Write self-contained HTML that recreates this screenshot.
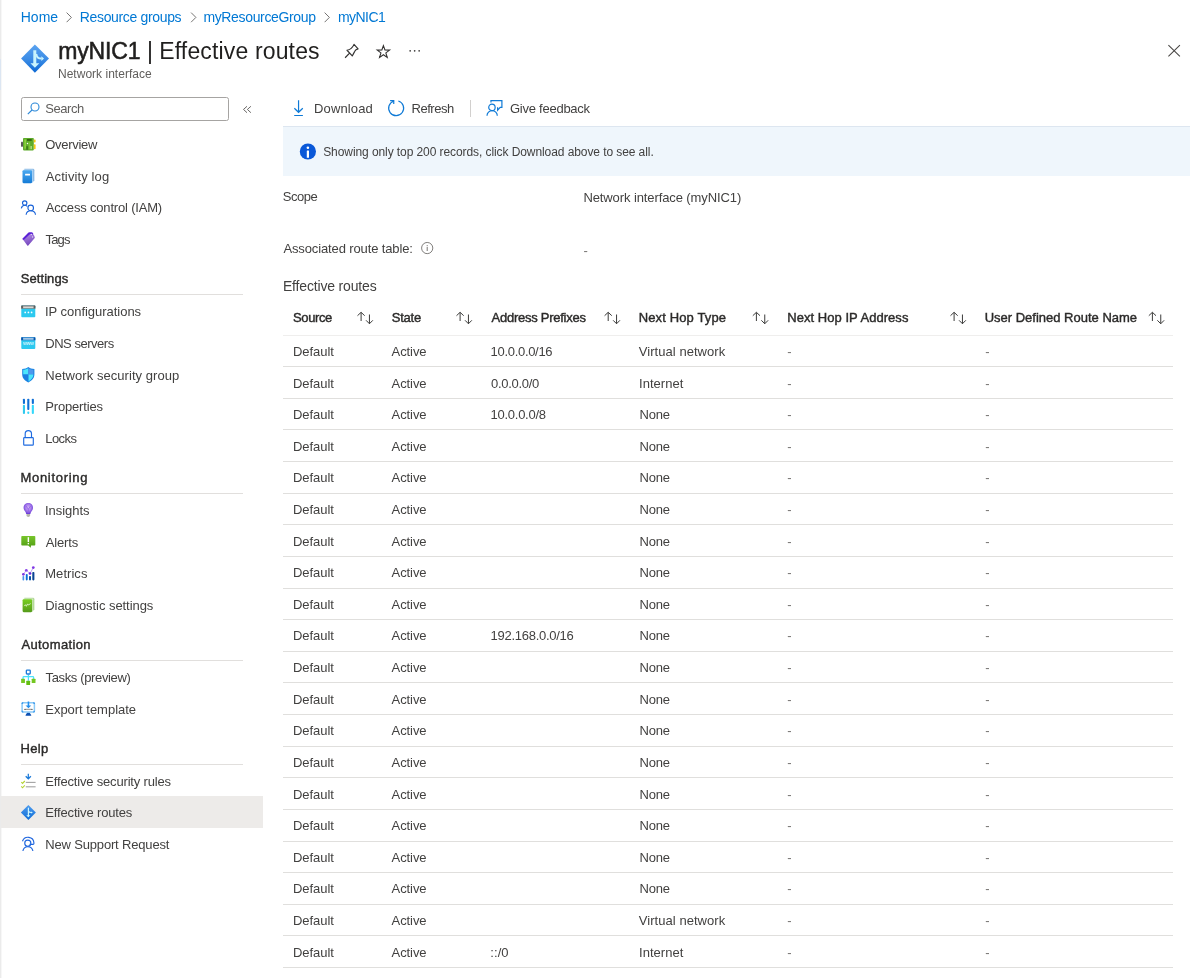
<!DOCTYPE html>
<html lang="en"><head><meta charset="utf-8"><title>myNIC1 | Effective routes</title>
<style>
*{box-sizing:border-box;margin:0;padding:0}
html,body{width:1200px;height:978px;overflow:hidden;background:#fff}
body{position:relative;font-family:"Liberation Sans",sans-serif;font-size:13px;color:#323130}
.a{position:absolute;white-space:nowrap;line-height:20px}
.t{position:absolute;white-space:nowrap;line-height:20px;color:#424140}
.bc{font-size:14px;color:#0078d4}
.sb{-webkit-text-stroke:0.4px #2b2a29;color:#2b2a29}
.ln{position:absolute;left:21px;width:222px;height:1px;background:#e1dfdd}
.ic{position:absolute;left:20px;width:16px;height:16px}
.rl{position:absolute;left:283px;width:890px;height:1px;background:#e0dfdd}
.sort{position:absolute;width:18px;height:14px}
</style></head><body><div id="root" style="position:absolute;left:0;top:0;width:1200px;height:978px;will-change:transform;filter:blur(0.35px)">
<div style="position:absolute;left:0;top:0;width:1px;height:978px;background:#ebebeb"></div><div style="position:absolute;left:1px;top:0;width:1px;height:978px;background:#f7f7f7"></div>
<div style="position:absolute;left:0;top:59px;width:1px;height:31px;background:#dce6f2"></div>
<div class="t bc" style="left:20.75px;top:7.4px;font-size:14px">Home</div>
<div class="t bc" style="left:79.75px;top:7.4px;font-size:14px;letter-spacing:-0.339px">Resource groups</div>
<div class="t bc" style="left:203.4px;top:7.4px;font-size:14px;letter-spacing:-0.350px">myResourceGroup</div>
<div class="t bc" style="left:337.9px;top:7.4px;font-size:14px;letter-spacing:-0.530px">myNIC1</div>
<svg class="a" style="left:66px;top:12px" width="8" height="12" viewBox="-0 -0.2 8 12"><path d="M0.6 0.4 L5.4 5.2 L0.6 10" fill="none" stroke="#6e6c6a" stroke-width="0.95"/></svg>
<svg class="a" style="left:190px;top:12px" width="8" height="12" viewBox="-0.5 -0.2 8 12"><path d="M0.6 0.4 L5.4 5.2 L0.6 10" fill="none" stroke="#6e6c6a" stroke-width="0.95"/></svg>
<svg class="a" style="left:324px;top:12px" width="8" height="12" viewBox="-0 -0.2 8 12"><path d="M0.6 0.4 L5.4 5.2 L0.6 10" fill="none" stroke="#6e6c6a" stroke-width="0.95"/></svg>
<svg class="a" style="left:14px;top:38px" width="42" height="42" viewBox="0 0 42 42"><defs><linearGradient id="dg" x1="0" y1="0" x2="0" y2="1"><stop offset="0" stop-color="#5aa3f0"/><stop offset="0.5" stop-color="#3d8de6"/><stop offset="1" stop-color="#0a68d4"/></linearGradient></defs><path d="M20.9 6.6 L35 20.6 L20.9 34.8 L7.1 20.6 Z" fill="url(#dg)"/><path d="M19.3 12.2 H22.3 V25.3 H25.3 L20.9 29.7 L16.4 25.3 H19.3 Z" fill="#c9f4fd"/><path d="M22.3 16 Q22.6 20.6 27.6 20.6" fill="none" stroke="#c9f4fd" stroke-width="2"/><path d="M27.4 18.2 L30 20.6 L27.4 23 Z" fill="#c9f4fd"/></svg>
<div class="t" style="left:58.25px;top:40.95px;font-size:23px;color:#201f1e;-webkit-text-stroke:0.55px #201f1e;letter-spacing:-0.150px">myNIC1</div>
<div class="t" style="left:147px;top:41.2px;font-size:23px;color:#201f1e">|</div>
<div class="t" style="left:159.25px;top:41.2px;font-size:23px;color:#201f1e;letter-spacing:0.150px">Effective routes</div>
<div class="t" style="left:58px;top:63.8px;font-size:12px;color:#605e5c;letter-spacing:0.016px">Network interface</div>
<svg class="a" style="left:338px;top:36px" width="90" height="30" viewBox="0 0 90 30"><path d="M16 8.4 L20.1 12.9 Q17.6 13.4 16.6 15.6 Q15.6 17.4 14.25 19.9 L9 14.25 Q11.4 13.9 13.2 12.4 Q14.9 11 16 8.4 Z M11.6 17.1 L7.1 21.75" fill="none" stroke="#323130" stroke-width="1.15" stroke-linejoin="round"/><path d="M45.40 9.60 L46.93 14.00 L51.58 14.09 L47.87 16.90 L49.22 21.36 L45.40 18.70 L41.58 21.36 L42.93 16.90 L39.22 14.09 L43.87 14.00 Z" fill="none" stroke="#323130" stroke-width="1.1" stroke-linejoin="miter"/><circle cx="72.15" cy="14.8" r="0.85" fill="#3b3a39"/><circle cx="76.65" cy="14.8" r="0.85" fill="#3b3a39"/><circle cx="81.15" cy="14.8" r="0.85" fill="#3b3a39"/></svg>
<svg class="a" style="left:1160px;top:40px" width="24" height="24" viewBox="0 0 24 24"><path d="M8.4 5.1 L19.9 16.4 M19.9 5.1 L8.4 16.4" stroke="#484644" stroke-width="1.05"/></svg>
<div style="position:absolute;left:21px;top:97px;width:208px;height:24px;border:1px solid #a6a4a2;border-radius:2.5px"></div>
<svg class="a" style="left:27px;top:102px" width="13" height="13" viewBox="0 0 13 13"><circle cx="8" cy="5" r="4" fill="none" stroke="#2b88d8" stroke-width="1.1"/><path d="M5 8 L0.8 12.2" stroke="#2b88d8" stroke-width="1.1"/></svg>
<div class="t" style="left:45.25px;top:99px;font-size:13px;color:#605e5c;letter-spacing:-0.450px">Search</div>
<svg class="a" style="left:240px;top:102px" width="16" height="16" viewBox="0 0 16 16"><path d="M7 4.3 L3.5 7.45 L7 10.7 M10.9 4.3 L7.4 7.45 L10.9 10.7" fill="none" stroke="#605e5c" stroke-width="0.95"/></svg>
<div style="position:absolute;left:1px;top:796px;width:262px;height:32px;background:#edebe9"></div>
<svg class="ic" style="top:136px;height:18px" viewBox="0 0 16 18"><g transform="translate(0 0.3)"><rect x="3" y="1.7" width="10.8" height="12.4" rx="0.8" fill="#5eab2b"/><rect x="1" y="5.5" width="2" height="4.9" rx="0.4" fill="#5a5a5a"/><rect x="13.8" y="3.1" width="1.8" height="3.1" rx="0.7" fill="#f6c915"/><rect x="13.8" y="8" width="1.8" height="4.9" rx="0.7" fill="#f6c915"/><rect x="7" y="2.8" width="4.7" height="1.7" fill="#2f5f0c"/><rect x="4.3" y="3.1" width="1.8" height="9.3" fill="#8ad13c"/><circle cx="7.5" cy="7.2" r="0.75" fill="#fff"/><rect x="6.2" y="9.9" width="2.1" height="3.6" fill="#3f7d1a"/><rect x="10.4" y="9.7" width="1.4" height="3.2" fill="#b9e294"/><rect x="8.6" y="6" width="1.6" height="7" fill="#7cc435"/></g></svg>
<div class="t" style="left:45.25px;top:134.9px;font-size:13px;letter-spacing:-0.286px">Overview</div>
<svg class="ic" style="top:168px;height:18px" viewBox="0 0 16 18"><g transform="translate(0 0)"><defs><linearGradient id="alg" x1="0" y1="0" x2="0" y2="1"><stop offset="0" stop-color="#49a8f0"/><stop offset="1" stop-color="#157bd6"/></linearGradient></defs><path d="M4.4 0.8 H13 Q14.4 0.8 14.4 2.2 V12.6 L12.4 14.6 H4 Z" fill="#8fbce6"/><rect x="3.6" y="1.6" width="9.4" height="1.4" fill="#b9d9f3"/><rect x="2.5" y="2.2" width="9.6" height="13" rx="1.1" fill="url(#alg)"/><rect x="12.1" y="2.6" width="0.9" height="11.6" fill="#a9d3f5"/><rect x="5.1" y="5.8" width="4.9" height="1.8" rx="0.3" fill="#fff"/></g></svg>
<div class="t" style="left:45.75px;top:166.6px;font-size:13px;letter-spacing:0.114px">Activity log</div>
<svg class="ic" style="top:199px;height:18px" viewBox="0 0 16 18"><g transform="translate(0 0.7)"><g fill="none" stroke="#1a63d8" stroke-width="1.12"><circle cx="4.7" cy="3.35" r="2.2"/><path d="M1.3 8.7 C1.7 6.8 3 5.6 4.7 5.6 C5.7 5.6 6.6 6 7.3 6.8"/><circle cx="10.7" cy="8.2" r="2.8"/><path d="M6.1 15 C6.4 12.4 8.3 11 10.8 11 C13.3 11 15.2 12.4 15.5 15"/></g></g></svg>
<div class="t" style="left:45.75px;top:198.3px;font-size:13px;letter-spacing:-0.184px">Access control (IAM)</div>
<svg class="ic" style="top:231px;height:18px" viewBox="0 0 16 18"><g transform="translate(0 0.4)"><defs><linearGradient id="tgg" x1="0" y1="0" x2="0.3" y2="1"><stop offset="0" stop-color="#b48fe6"/><stop offset="1" stop-color="#7446bd"/></linearGradient></defs><path d="M2.1 7.5 L8.5 1.1 Q8.9 0.8 9.4 0.8 L11.6 0.8 Q12.6 0.8 12.9 1.8 L13.2 3.4 L6 10.4 Z" fill="#5b21d6"/><path d="M3.5 8.9 L9.6 3 Q10 2.7 10.5 2.8 L13.2 3.1 Q13.8 3.2 14 3.8 L14.8 5.8 Q15 6.4 14.5 6.9 L8.3 14.2 Q7.8 14.7 7.3 14.2 Z" fill="url(#tgg)"/><circle cx="11.3" cy="3" r="0.7" fill="#e6dcf7"/><ellipse cx="12.6" cy="5.5" rx="0.55" ry="0.9" fill="#d9c9f3"/></g></svg>
<div class="t" style="left:45.5px;top:230px;font-size:13px;letter-spacing:-0.833px">Tags</div>
<div class="t sb" style="left:20.75px;top:269.15px;font-size:13px;letter-spacing:0.071px">Settings</div>
<div class="ln" style="top:294px"></div>
<svg class="ic" style="top:303px;height:18px" viewBox="0 0 16 18"><g transform="translate(0 0.6)"><rect x="1.3" y="1.7" width="14" height="11.9" rx="0.9" fill="#2cc9ef"/><path d="M1.3 5.1 V2.6 Q1.3 1.7 2.2 1.7 H14.4 Q15.3 1.7 15.3 2.6 V5.1 Z" fill="#8a8886"/><rect x="1.3" y="2.2" width="1.6" height="2.6" fill="#5f5d5b"/><rect x="13.7" y="2.2" width="1.6" height="2.6" fill="#5f5d5b"/><rect x="3.2" y="3" width="10.2" height="1.3" fill="#e1dfdd"/><circle cx="5.2" cy="8.8" r="0.85" fill="#fff"/><circle cx="8.4" cy="8.8" r="0.85" fill="#fff"/><circle cx="11.6" cy="8.8" r="0.85" fill="#fff"/></g></svg>
<div class="t" style="left:45px;top:302.2px;font-size:13px;letter-spacing:-0.031px">IP configurations</div>
<svg class="ic" style="top:335px;height:18px" viewBox="0 0 16 18"><g transform="translate(0 0.3)"><rect x="1.3" y="1.7" width="14" height="11.9" rx="0.9" fill="#2cc9ef"/><path d="M1.3 5.1 V2.6 Q1.3 1.7 2.2 1.7 H14.4 Q15.3 1.7 15.3 2.6 V5.1 Z" fill="#3b8fd1"/><rect x="1.3" y="2.2" width="1.6" height="2.6" fill="#0b4fa8"/><rect x="13.7" y="2.2" width="1.6" height="2.6" fill="#0b4fa8"/><rect x="3.2" y="2.9" width="10.2" height="1.3" fill="#bcd3ea"/><text x="8.45" y="10.1" font-family="Liberation Sans, sans-serif" font-size="4.7" font-weight="bold" fill="#c9f2fd" text-anchor="middle" letter-spacing="-0.1">www</text></g></svg>
<div class="t" style="left:45.25px;top:333.9px;font-size:13px;letter-spacing:-0.475px">DNS servers</div>
<svg class="ic" style="top:367px;height:18px" viewBox="0 0 16 18"><g transform="translate(0 0)"><path d="M8.3 0 C9.6 1.2 12 1.9 14.4 1.9 V7.6 C14.4 11.4 11.6 14 8.3 15.5 C5 14 2.2 11.4 2.2 7.6 V1.9 C4.6 1.9 7 1.2 8.3 0 Z" fill="#1b84e2"/><path d="M8.3 1.2 V7.5 H3.2 V2.8 C5 2.7 7 2.1 8.3 1.2 Z" fill="#4ce6fc"/><path d="M8.3 1.2 C9.6 2.1 11.6 2.7 13.4 2.8 V7.5 H8.3 Z" fill="#4e97ec"/><path d="M8.3 7.5 H13.4 C13.4 10.6 11 13 8.3 14.4 Z" fill="#4ce6fc"/><path d="M8.3 7.5 V14.4 C5.6 13 3.2 10.6 3.2 7.5 Z" fill="#1d7fe0"/></g></svg>
<div class="t" style="left:45.25px;top:365.6px;font-size:13px;letter-spacing:0.048px">Network security group</div>
<svg class="ic" style="top:398px;height:18px" viewBox="0 0 16 18"><g transform="translate(0 0.6)"><rect x="2.9" y="0.1" width="2.1" height="5.3" rx="0.9" fill="#0f6fd6"/><rect x="2.9" y="6.2" width="2.1" height="9.1" rx="0.9" fill="#31c9ee"/><rect x="7.25" y="0.1" width="2.1" height="11.3" rx="0.9" fill="#0f6fd6"/><rect x="7.25" y="13" width="2.1" height="2.3" rx="0.8" fill="#35d8fb"/><rect x="11.8" y="0.1" width="2.1" height="5.3" rx="0.9" fill="#0f6fd6"/><rect x="11.8" y="6.2" width="2.1" height="9.1" rx="0.9" fill="#35d8fb"/></g></svg>
<div class="t" style="left:45.25px;top:397.2px;font-size:13px;letter-spacing:-0.167px">Properties</div>
<svg class="ic" style="top:430px;height:18px" viewBox="0 0 16 18"><g transform="translate(0 0.3)"><g fill="none" stroke="#1f6be0" stroke-width="1.15"><rect x="3.7" y="7.3" width="9.6" height="7.5" rx="0.7"/><path d="M5.2 7.3 V3.5 A3.15 3.15 0 0 1 11.5 3.5 V7.3"/></g></g></svg>
<div class="t" style="left:45.25px;top:428.9px;font-size:13px;letter-spacing:-0.562px">Locks</div>
<div class="t sb" style="left:20.5px;top:468.15px;font-size:13px;letter-spacing:0.694px">Monitoring</div>
<div class="ln" style="top:493px"></div>
<svg class="ic" style="top:502px;height:18px" viewBox="0 0 16 18"><g transform="translate(0 0.4)"><defs><radialGradient id="ing" cx="0.5" cy="0.42" r="0.55"><stop offset="0" stop-color="#d4b6f5"/><stop offset="0.55" stop-color="#a67beb"/><stop offset="1" stop-color="#6a3cd6"/></radialGradient></defs><path d="M8.3 0.6 C11 0.6 13 2.7 13 5.3 C13 7 12.2 8 11.4 9.1 C10.8 9.9 10.5 10.7 10.4 11.7 H6.2 C6.1 10.7 5.8 9.9 5.2 9.1 C4.4 8 3.6 7 3.6 5.3 C3.6 2.7 5.6 0.6 8.3 0.6 Z" fill="url(#ing)"/><path d="M6 3.6 L8.3 6.8 L10.6 3.6 M8.3 6.8 V10.6" stroke="#8f5fe6" stroke-width="0.8" fill="none"/><path d="M6.5 11.7 H10.1 V13.2 Q10.1 14.5 8.3 14.5 Q6.5 14.5 6.5 13.2 Z" fill="#b5b5ad"/></g></svg>
<div class="t" style="left:45px;top:501px;font-size:13px;letter-spacing:-0.036px">Insights</div>
<svg class="ic" style="top:534px;height:18px" viewBox="0 0 16 18"><g transform="translate(0 0)"><defs><linearGradient id="alr" x1="0" y1="0" x2="0" y2="1"><stop offset="0" stop-color="#78c62b"/><stop offset="1" stop-color="#4f9b13"/></linearGradient></defs><path d="M2.1 1.9 H14.5 Q15.3 1.9 15.3 2.7 V10.8 Q15.3 11.6 14.5 11.6 H11 L10.8 13.8 L8.2 11.6 H2.1 Q1.3 11.6 1.3 10.8 V2.7 Q1.3 1.9 2.1 1.9 Z" fill="url(#alr)"/><rect x="7.65" y="3.2" width="1.4" height="4.9" fill="#fff"/><rect x="7.65" y="9" width="1.4" height="1.3" fill="#fff"/></g></svg>
<div class="t" style="left:45.75px;top:532.6px;font-size:13px;letter-spacing:-0.150px">Alerts</div>
<svg class="ic" style="top:565px;height:18px" viewBox="0 0 16 18"><g transform="translate(0 0.7)"><rect x="2.5" y="10.3" width="1.7" height="4.4" rx="0.7" fill="#4a92ea"/><rect x="5.8" y="8.3" width="1.9" height="6.4" rx="0.8" fill="#0b6dd7"/><rect x="9" y="10.4" width="2" height="4.3" rx="0.8" fill="#0a50a2"/><rect x="12.3" y="6.3" width="2.1" height="8.4" rx="0.8" fill="#0a4494"/><path d="M3.36 8.6 L6.3 4.6 L10 7.8 L13.3 1.9" fill="none" stroke="#b79cf2" stroke-width="0.9"/><circle cx="3.36" cy="8.6" r="1.35" fill="#7a36e0"/><circle cx="6.3" cy="4.6" r="1.35" fill="#8a44e8"/><circle cx="10" cy="7.8" r="1.35" fill="#6a22d8"/><circle cx="13.3" cy="1.9" r="1.35" fill="#8038e4"/></g></svg>
<div class="t" style="left:45.25px;top:564.3px;font-size:13px;letter-spacing:0.042px">Metrics</div>
<svg class="ic" style="top:597px;height:18px" viewBox="0 0 16 18"><g transform="translate(0 0.4)"><defs><linearGradient id="dgg" x1="0" y1="0" x2="0" y2="1"><stop offset="0" stop-color="#78cf22"/><stop offset="1" stop-color="#559a1a"/></linearGradient></defs><path d="M4.4 0.4 H13 Q14.4 0.4 14.4 1.8 V12.2 L12.4 14.2 H4 Z" fill="#b4d99a"/><rect x="3.6" y="1.2" width="9.4" height="1.4" fill="#d3e9c3"/><rect x="2.6" y="1.8" width="9.5" height="13" rx="1.1" fill="url(#dgg)"/><rect x="12.1" y="2.2" width="0.9" height="11.6" fill="#c3e2ab"/><path d="M4.3 8.7 L5.4 7.3 L6.4 8.9 L7.5 6.5 L8.3 7.6 L10.7 6.2" fill="none" stroke="#e3f5d2" stroke-width="0.85"/></g></svg>
<div class="t" style="left:45.25px;top:596px;font-size:13px;letter-spacing:-0.056px">Diagnostic settings</div>
<div class="t sb" style="left:21.5px;top:635.25px;font-size:13px;letter-spacing:0.361px">Automation</div>
<div class="ln" style="top:660px"></div>
<svg class="ic" style="top:669px;height:18px" viewBox="0 0 16 18"><g transform="translate(0 0.7)"><path d="M8.4 5 V11 M3.05 9.3 V7.7 Q3.05 6.85 3.9 6.85 H12.8 Q13.65 6.85 13.65 7.7 V9.3" fill="none" stroke="#4be2fb" stroke-width="1.25"/><rect x="6.35" y="0.4" width="3.9" height="3.9" rx="0.7" fill="#fff" stroke="#1b7bda" stroke-width="1.3"/><rect x="1.15" y="9.1" width="3.8" height="4.1" rx="0.5" fill="#74c721"/><rect x="6.3" y="11" width="3.8" height="4.2" rx="0.5" fill="#63bd12"/><rect x="11.7" y="9.1" width="3.8" height="4.1" rx="0.5" fill="#74c721"/></g></svg>
<div class="t" style="left:45.5px;top:668.3px;font-size:13px;letter-spacing:-0.357px">Tasks (preview)</div>
<svg class="ic" style="top:701px;height:18px" viewBox="0 0 16 18"><g transform="translate(0 0.4)"><path d="M7.3 11 H9.5 L11.2 13.6 Q11.7 14.4 10.8 14.4 H6 Q5.1 14.4 5.6 13.6 Z" fill="#0c50b2"/><rect x="2.1" y="1.35" width="12.3" height="9.2" rx="1" fill="#fff" stroke="#8ccaf6" stroke-width="1.5"/><path d="M1.4 2.6 Q1.4 0.7 3.2 0.6 L3.2 2 Q2.8 2 2.8 2.6 Z M15.1 2.6 Q15.1 0.7 13.3 0.6 L13.3 2 Q13.7 2 13.7 2.6 Z M1.4 9.3 Q1.4 11.2 3.2 11.3 L3.2 9.9 Q2.8 9.9 2.8 9.3 Z M15.1 9.3 Q15.1 11.2 13.3 11.3 L13.3 9.9 Q13.7 9.9 13.7 9.3 Z" fill="#3d98ea"/><path d="M7.65 0 H9.25 V4 H11.3 L8.45 6.9 L5.5 4 H7.65 Z" fill="#2490ee"/><rect x="4.2" y="7.4" width="8.5" height="1.2" rx="0.5" fill="#a6a4a2"/><rect x="4.4" y="7.5" width="1.4" height="1" rx="0.5" fill="#6c6a68"/><rect x="11.1" y="7.5" width="1.4" height="1" rx="0.5" fill="#6c6a68"/></g></svg>
<div class="t" style="left:45.25px;top:700px;font-size:13px;letter-spacing:-0.018px">Export template</div>
<div class="t sb" style="left:20.5px;top:739.25px;font-size:13px;letter-spacing:0.333px">Help</div>
<div class="ln" style="top:764px"></div>
<svg class="ic" style="top:773px;height:18px" viewBox="0 0 16 18"><g transform="translate(0 0.5)"><path d="M8.3 0.3 V4.8 M5.7 2.7 L8.3 5.3 L10.9 2.7" fill="none" stroke="#1b7ad9" stroke-width="1.25"/><rect x="5.8" y="8.35" width="9.8" height="1.1" fill="#a3a3a3"/><rect x="5.8" y="12.75" width="9.8" height="1.1" fill="#a3a3a3"/><path d="M1.3 8.5 L2.5 9.9 L4.8 7.5 M1.3 12.9 L2.5 14.3 L4.8 11.9" fill="none" stroke="#b4d232" stroke-width="1.1"/></g></svg>
<div class="t" style="left:45.25px;top:772.1px;font-size:13px;letter-spacing:-0.174px">Effective security rules</div>
<svg class="ic" style="top:805px;height:18px" viewBox="0 0 16 18"><g transform="translate(0 0.2)"><defs><linearGradient id="erg" x1="0" y1="0" x2="0" y2="1"><stop offset="0" stop-color="#509cee"/><stop offset="1" stop-color="#0c6cd6"/></linearGradient></defs><path d="M8.4 -0.15 L15.9 7.3 L8.4 14.8 L0.9 7.3 Z" fill="url(#erg)"/><path d="M8.4 3 V10.4 M8.6 6.2 Q9.4 7.3 11.2 7.3" fill="none" stroke="#ccf5fd" stroke-width="1.2" stroke-linecap="round"/><path d="M6.3 10 H10.3 L8.3 12 Z M11 6.2 L12.9 7.3 L11 8.4 Z" fill="#ccf5fd"/></g></svg>
<div class="t" style="left:45.25px;top:803.2px;font-size:13px;letter-spacing:-0.150px">Effective routes</div>
<svg class="ic" style="top:836px;height:18px" viewBox="0 0 16 18"><g transform="translate(0 0.9)"><g fill="none" stroke="#1f66de" stroke-width="1.15"><circle cx="7.8" cy="6.3" r="3.05"/><path d="M2.5 4.4 A5.85 5.85 0 0 1 13.9 5.9 V6.6 Q13.9 7.5 13 7.5 H9.6"/><path d="M2.9 14.1 C3.3 11.5 5.3 9.8 7.8 9.8 C10.3 9.8 12.5 11.5 12.9 14.1"/></g></g></svg>
<div class="t" style="left:45.25px;top:834.8px;font-size:13px;letter-spacing:-0.167px">New Support Request</div>
<svg class="a" style="left:286px;top:96px" width="24" height="24" viewBox="0 0 24 24"><path d="M12.56 4.2 V16 M8.35 12.25 L12.56 16.3 L16.8 12.25 M8.2 19.5 H16.9" fill="none" stroke="#0f7ad6" stroke-width="1.2"/></svg>
<div class="t" style="left:314px;top:98.9px;font-size:13px;letter-spacing:0.143px">Download</div>
<svg class="a" style="left:384px;top:96px" width="24" height="24" viewBox="0 0 24 24"><path d="M14.34 4.98 A7.5 7.5 0 1 1 9.9 5" fill="none" stroke="#0f7ad6" stroke-width="1.2"/><path d="M6.1 4.6 H9.75 V7.9" fill="none" stroke="#0f7ad6" stroke-width="1.2"/></svg>
<div class="t" style="left:411.5px;top:98.9px;font-size:13px;letter-spacing:-0.458px">Refresh</div>
<div style="position:absolute;left:469.5px;top:100px;width:1px;height:16.5px;background:#d2d0ce"></div>
<svg class="a" style="left:482px;top:96px" width="24" height="24" viewBox="0 0 24 24"><circle cx="9.94" cy="11.4" r="3.2" fill="none" stroke="#0f7ad6" stroke-width="1.2"/><path d="M5 19.7 A5.15 5.15 0 0 1 15.3 19.7" fill="none" stroke="#0f7ad6" stroke-width="1.2"/><path d="M8.96 6.6 V4.55 H19.9 V11.3 H18.2 L15.6 14.2 V11.2" fill="none" stroke="#0f7ad6" stroke-width="1.2"/></svg>
<div class="t" style="left:510px;top:98.9px;font-size:13px;letter-spacing:-0.250px">Give feedback</div>
<div style="position:absolute;left:283px;top:126px;width:907px;height:1px;background:#dde6f0"></div>
<div style="position:absolute;left:283px;top:127px;width:907px;height:49px;background:#eff6fc"></div>
<svg class="a" style="left:299px;top:143px" width="18" height="18" viewBox="0 0 18 18"><circle cx="8.9" cy="8.5" r="8.1" fill="#0a58d8"/><rect x="7.8" y="7.6" width="2.2" height="7.2" rx="0.3" fill="#fff"/><circle cx="8.9" cy="4.75" r="1.3" fill="#fff"/></svg>
<div class="t" style="left:323.2px;top:142px;font-size:12px;letter-spacing:-0.082px">Showing only top 200 records, click Download above to see all.</div>
<div class="t" style="left:282.65px;top:186.5px;font-size:13px;letter-spacing:-0.425px">Scope</div>
<div class="t" style="left:583.4px;top:188.3px;font-size:13px;letter-spacing:-0.100px">Network interface (myNIC1)</div>
<div class="t" style="left:283.4px;top:238.5px;font-size:13px;letter-spacing:-0.123px">Associated route table:</div>
<svg class="a" style="left:420px;top:241px" width="14" height="14" viewBox="0 0 14 14"><circle cx="7.2" cy="7.05" r="5.6" fill="none" stroke="#7a7876" stroke-width="0.95"/><rect x="6.7" y="6" width="1" height="4" fill="#7a7876"/><rect x="6.7" y="4.1" width="1" height="1.1" fill="#7a7876"/></svg>
<div class="t" style="left:583.55px;top:240.7px;font-size:13px;color:#767472">-</div>
<div class="t" style="left:282.95px;top:275.8px;font-size:14px;letter-spacing:-0.167px">Effective routes</div>
<div class="t sb" style="left:293px;top:307.85px;font-size:13px;letter-spacing:-0.370px">Source</div>
<svg class="sort" style="left:357px;top:311px" viewBox="0 -0.2 18 14"><path d="M4.1 1.3 V9.8 M0.5 4.5 L4.1 1.1 L7.7 4.5 M12.45 3.3 V12.4 M9.05 9.1 L12.45 12.55 L15.85 9.1" fill="none" stroke="#323130" stroke-width="0.95"/></svg>
<div class="t sb" style="left:391.7px;top:307.85px;font-size:13px;letter-spacing:-0.225px">State</div>
<svg class="sort" style="left:456px;top:311px" viewBox="0 -0.2 18 14"><path d="M4.1 1.3 V9.8 M0.5 4.5 L4.1 1.1 L7.7 4.5 M12.45 3.3 V12.4 M9.05 9.1 L12.45 12.55 L15.85 9.1" fill="none" stroke="#323130" stroke-width="0.95"/></svg>
<div class="t sb" style="left:491.55px;top:307.85px;font-size:13px;letter-spacing:-0.257px">Address Prefixes</div>
<svg class="sort" style="left:604px;top:311px" viewBox="-0.1 -0.2 18 14"><path d="M4.1 1.3 V9.8 M0.5 4.5 L4.1 1.1 L7.7 4.5 M12.45 3.3 V12.4 M9.05 9.1 L12.45 12.55 L15.85 9.1" fill="none" stroke="#323130" stroke-width="0.95"/></svg>
<div class="t sb" style="left:638.65px;top:307.85px;font-size:13px;letter-spacing:0.133px">Next Hop Type</div>
<svg class="sort" style="left:752px;top:311px" viewBox="-0.3 -0.2 18 14"><path d="M4.1 1.3 V9.8 M0.5 4.5 L4.1 1.1 L7.7 4.5 M12.45 3.3 V12.4 M9.05 9.1 L12.45 12.55 L15.85 9.1" fill="none" stroke="#323130" stroke-width="0.95"/></svg>
<div class="t sb" style="left:787.25px;top:307.85px;font-size:13px;letter-spacing:0.039px">Next Hop IP Address</div>
<svg class="sort" style="left:950px;top:311px" viewBox="0 -0.2 18 14"><path d="M4.1 1.3 V9.8 M0.5 4.5 L4.1 1.1 L7.7 4.5 M12.45 3.3 V12.4 M9.05 9.1 L12.45 12.55 L15.85 9.1" fill="none" stroke="#323130" stroke-width="0.95"/></svg>
<div class="t sb" style="left:984.65px;top:307.85px;font-size:13px">User Defined Route Name</div>
<svg class="sort" style="left:1148px;top:311px" viewBox="-0.3 -0.2 18 14"><path d="M4.1 1.3 V9.8 M0.5 4.5 L4.1 1.1 L7.7 4.5 M12.45 3.3 V12.4 M9.05 9.1 L12.45 12.55 L15.85 9.1" fill="none" stroke="#323130" stroke-width="0.95"/></svg>
<div class="rl" style="top:334.6px;background:#efeeed"></div>
<div class="t" style="left:293px;top:341.9px;font-size:13px;letter-spacing:-0.042px">Default</div>
<div class="t" style="left:391.6px;top:341.9px;font-size:13px;letter-spacing:-0.090px">Active</div>
<div class="t" style="left:490.6px;top:341.9px;font-size:13px;letter-spacing:-0.310px">10.0.0.0/16</div>
<div class="t" style="left:638.8px;top:341.9px;font-size:13px;letter-spacing:0.046px">Virtual network</div>
<div class="t" style="left:787.35px;top:341.9px;font-size:13px;color:#767472">-</div>
<div class="t" style="left:985.35px;top:341.9px;font-size:13px;color:#767472">-</div>
<div class="rl" style="top:366.22px"></div>
<div class="t" style="left:293px;top:373.52px;font-size:13px;letter-spacing:-0.042px">Default</div>
<div class="t" style="left:391.6px;top:373.52px;font-size:13px;letter-spacing:-0.090px">Active</div>
<div class="t" style="left:491.1px;top:373.52px;font-size:13px;letter-spacing:-0.300px">0.0.0.0/0</div>
<div class="t" style="left:639.05px;top:373.52px;font-size:13px;letter-spacing:0.021px">Internet</div>
<div class="t" style="left:787.35px;top:373.52px;font-size:13px;color:#767472">-</div>
<div class="t" style="left:985.35px;top:373.52px;font-size:13px;color:#767472">-</div>
<div class="rl" style="top:397.84px"></div>
<div class="t" style="left:293px;top:405.14px;font-size:13px;letter-spacing:-0.042px">Default</div>
<div class="t" style="left:391.6px;top:405.14px;font-size:13px;letter-spacing:-0.090px">Active</div>
<div class="t" style="left:490.6px;top:405.14px;font-size:13px;letter-spacing:-0.272px">10.0.0.0/8</div>
<div class="t" style="left:639.4px;top:405.14px;font-size:13px;letter-spacing:-0.133px">None</div>
<div class="t" style="left:787.35px;top:405.14px;font-size:13px;color:#767472">-</div>
<div class="t" style="left:985.35px;top:405.14px;font-size:13px;color:#767472">-</div>
<div class="rl" style="top:429.46px"></div>
<div class="t" style="left:293px;top:436.76px;font-size:13px;letter-spacing:-0.042px">Default</div>
<div class="t" style="left:391.6px;top:436.76px;font-size:13px;letter-spacing:-0.090px">Active</div>
<div class="t" style="left:639.4px;top:436.76px;font-size:13px;letter-spacing:-0.133px">None</div>
<div class="t" style="left:787.35px;top:436.76px;font-size:13px;color:#767472">-</div>
<div class="t" style="left:985.35px;top:436.76px;font-size:13px;color:#767472">-</div>
<div class="rl" style="top:461.08px"></div>
<div class="t" style="left:293px;top:468.38px;font-size:13px;letter-spacing:-0.042px">Default</div>
<div class="t" style="left:391.6px;top:468.38px;font-size:13px;letter-spacing:-0.090px">Active</div>
<div class="t" style="left:639.4px;top:468.38px;font-size:13px;letter-spacing:-0.133px">None</div>
<div class="t" style="left:787.35px;top:468.38px;font-size:13px;color:#767472">-</div>
<div class="t" style="left:985.35px;top:468.38px;font-size:13px;color:#767472">-</div>
<div class="rl" style="top:492.7px"></div>
<div class="t" style="left:293px;top:500px;font-size:13px;letter-spacing:-0.042px">Default</div>
<div class="t" style="left:391.6px;top:500px;font-size:13px;letter-spacing:-0.090px">Active</div>
<div class="t" style="left:639.4px;top:500px;font-size:13px;letter-spacing:-0.133px">None</div>
<div class="t" style="left:787.35px;top:500px;font-size:13px;color:#767472">-</div>
<div class="t" style="left:985.35px;top:500px;font-size:13px;color:#767472">-</div>
<div class="rl" style="top:524.32px"></div>
<div class="t" style="left:293px;top:531.62px;font-size:13px;letter-spacing:-0.042px">Default</div>
<div class="t" style="left:391.6px;top:531.62px;font-size:13px;letter-spacing:-0.090px">Active</div>
<div class="t" style="left:639.4px;top:531.62px;font-size:13px;letter-spacing:-0.133px">None</div>
<div class="t" style="left:787.35px;top:531.62px;font-size:13px;color:#767472">-</div>
<div class="t" style="left:985.35px;top:531.62px;font-size:13px;color:#767472">-</div>
<div class="rl" style="top:555.94px"></div>
<div class="t" style="left:293px;top:563.24px;font-size:13px;letter-spacing:-0.042px">Default</div>
<div class="t" style="left:391.6px;top:563.24px;font-size:13px;letter-spacing:-0.090px">Active</div>
<div class="t" style="left:639.4px;top:563.24px;font-size:13px;letter-spacing:-0.133px">None</div>
<div class="t" style="left:787.35px;top:563.24px;font-size:13px;color:#767472">-</div>
<div class="t" style="left:985.35px;top:563.24px;font-size:13px;color:#767472">-</div>
<div class="rl" style="top:587.56px"></div>
<div class="t" style="left:293px;top:594.86px;font-size:13px;letter-spacing:-0.042px">Default</div>
<div class="t" style="left:391.6px;top:594.86px;font-size:13px;letter-spacing:-0.090px">Active</div>
<div class="t" style="left:639.4px;top:594.86px;font-size:13px;letter-spacing:-0.133px">None</div>
<div class="t" style="left:787.35px;top:594.86px;font-size:13px;color:#767472">-</div>
<div class="t" style="left:985.35px;top:594.86px;font-size:13px;color:#767472">-</div>
<div class="rl" style="top:619.18px"></div>
<div class="t" style="left:293px;top:626.48px;font-size:13px;letter-spacing:-0.042px">Default</div>
<div class="t" style="left:391.6px;top:626.48px;font-size:13px;letter-spacing:-0.090px">Active</div>
<div class="t" style="left:490.6px;top:626.48px;font-size:13px;letter-spacing:-0.273px">192.168.0.0/16</div>
<div class="t" style="left:639.4px;top:626.48px;font-size:13px;letter-spacing:-0.133px">None</div>
<div class="t" style="left:787.35px;top:626.48px;font-size:13px;color:#767472">-</div>
<div class="t" style="left:985.35px;top:626.48px;font-size:13px;color:#767472">-</div>
<div class="rl" style="top:650.8px"></div>
<div class="t" style="left:293px;top:658.1px;font-size:13px;letter-spacing:-0.042px">Default</div>
<div class="t" style="left:391.6px;top:658.1px;font-size:13px;letter-spacing:-0.090px">Active</div>
<div class="t" style="left:639.4px;top:658.1px;font-size:13px;letter-spacing:-0.133px">None</div>
<div class="t" style="left:787.35px;top:658.1px;font-size:13px;color:#767472">-</div>
<div class="t" style="left:985.35px;top:658.1px;font-size:13px;color:#767472">-</div>
<div class="rl" style="top:682.42px"></div>
<div class="t" style="left:293px;top:689.72px;font-size:13px;letter-spacing:-0.042px">Default</div>
<div class="t" style="left:391.6px;top:689.72px;font-size:13px;letter-spacing:-0.090px">Active</div>
<div class="t" style="left:639.4px;top:689.72px;font-size:13px;letter-spacing:-0.133px">None</div>
<div class="t" style="left:787.35px;top:689.72px;font-size:13px;color:#767472">-</div>
<div class="t" style="left:985.35px;top:689.72px;font-size:13px;color:#767472">-</div>
<div class="rl" style="top:714.04px"></div>
<div class="t" style="left:293px;top:721.34px;font-size:13px;letter-spacing:-0.042px">Default</div>
<div class="t" style="left:391.6px;top:721.34px;font-size:13px;letter-spacing:-0.090px">Active</div>
<div class="t" style="left:639.4px;top:721.34px;font-size:13px;letter-spacing:-0.133px">None</div>
<div class="t" style="left:787.35px;top:721.34px;font-size:13px;color:#767472">-</div>
<div class="t" style="left:985.35px;top:721.34px;font-size:13px;color:#767472">-</div>
<div class="rl" style="top:745.66px"></div>
<div class="t" style="left:293px;top:752.96px;font-size:13px;letter-spacing:-0.042px">Default</div>
<div class="t" style="left:391.6px;top:752.96px;font-size:13px;letter-spacing:-0.090px">Active</div>
<div class="t" style="left:639.4px;top:752.96px;font-size:13px;letter-spacing:-0.133px">None</div>
<div class="t" style="left:787.35px;top:752.96px;font-size:13px;color:#767472">-</div>
<div class="t" style="left:985.35px;top:752.96px;font-size:13px;color:#767472">-</div>
<div class="rl" style="top:777.28px"></div>
<div class="t" style="left:293px;top:784.58px;font-size:13px;letter-spacing:-0.042px">Default</div>
<div class="t" style="left:391.6px;top:784.58px;font-size:13px;letter-spacing:-0.090px">Active</div>
<div class="t" style="left:639.4px;top:784.58px;font-size:13px;letter-spacing:-0.133px">None</div>
<div class="t" style="left:787.35px;top:784.58px;font-size:13px;color:#767472">-</div>
<div class="t" style="left:985.35px;top:784.58px;font-size:13px;color:#767472">-</div>
<div class="rl" style="top:808.9px"></div>
<div class="t" style="left:293px;top:816.2px;font-size:13px;letter-spacing:-0.042px">Default</div>
<div class="t" style="left:391.6px;top:816.2px;font-size:13px;letter-spacing:-0.090px">Active</div>
<div class="t" style="left:639.4px;top:816.2px;font-size:13px;letter-spacing:-0.133px">None</div>
<div class="t" style="left:787.35px;top:816.2px;font-size:13px;color:#767472">-</div>
<div class="t" style="left:985.35px;top:816.2px;font-size:13px;color:#767472">-</div>
<div class="rl" style="top:840.52px"></div>
<div class="t" style="left:293px;top:847.82px;font-size:13px;letter-spacing:-0.042px">Default</div>
<div class="t" style="left:391.6px;top:847.82px;font-size:13px;letter-spacing:-0.090px">Active</div>
<div class="t" style="left:639.4px;top:847.82px;font-size:13px;letter-spacing:-0.133px">None</div>
<div class="t" style="left:787.35px;top:847.82px;font-size:13px;color:#767472">-</div>
<div class="t" style="left:985.35px;top:847.82px;font-size:13px;color:#767472">-</div>
<div class="rl" style="top:872.14px"></div>
<div class="t" style="left:293px;top:879.44px;font-size:13px;letter-spacing:-0.042px">Default</div>
<div class="t" style="left:391.6px;top:879.44px;font-size:13px;letter-spacing:-0.090px">Active</div>
<div class="t" style="left:639.4px;top:879.44px;font-size:13px;letter-spacing:-0.133px">None</div>
<div class="t" style="left:787.35px;top:879.44px;font-size:13px;color:#767472">-</div>
<div class="t" style="left:985.35px;top:879.44px;font-size:13px;color:#767472">-</div>
<div class="rl" style="top:903.76px"></div>
<div class="t" style="left:293px;top:911.06px;font-size:13px;letter-spacing:-0.042px">Default</div>
<div class="t" style="left:391.6px;top:911.06px;font-size:13px;letter-spacing:-0.090px">Active</div>
<div class="t" style="left:638.8px;top:911.06px;font-size:13px;letter-spacing:0.046px">Virtual network</div>
<div class="t" style="left:787.35px;top:911.06px;font-size:13px;color:#767472">-</div>
<div class="t" style="left:985.35px;top:911.06px;font-size:13px;color:#767472">-</div>
<div class="rl" style="top:935.38px"></div>
<div class="t" style="left:293px;top:942.68px;font-size:13px;letter-spacing:-0.042px">Default</div>
<div class="t" style="left:391.6px;top:942.68px;font-size:13px;letter-spacing:-0.090px">Active</div>
<div class="t" style="left:490.35px;top:942.68px;font-size:13px;letter-spacing:0.050px">::/0</div>
<div class="t" style="left:639.05px;top:942.68px;font-size:13px;letter-spacing:0.021px">Internet</div>
<div class="t" style="left:787.35px;top:942.68px;font-size:13px;color:#767472">-</div>
<div class="t" style="left:985.35px;top:942.68px;font-size:13px;color:#767472">-</div>
<div class="rl" style="top:967px"></div>
</div></body></html>
